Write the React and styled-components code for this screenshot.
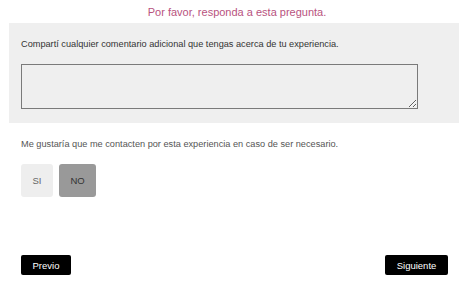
import React, { useState } from 'react';
import styled, { createGlobalStyle } from 'styled-components';

const GlobalStyle = createGlobalStyle`
  body {
    margin: 0;
    background: #ffffff;
    font-family: "Liberation Sans", Arial, sans-serif;
  }
`;

const Page = styled.div`
  width: 474px;
  height: 295px;
  display: flex;
  flex-direction: column;
  box-sizing: border-box;
  padding: 5px 15px 0 9px;
`;

const Warning = styled.div`
  text-align: center;
  color: #b8527e;
  font-size: 11px;
  line-height: 15px;
  padding-left: 6px;
  margin-bottom: 3px;
`;

const Panel = styled.div`
  background: #efefef;
  padding: 14px 41px 14px 12px;
  display: flex;
  flex-direction: column;
`;

const Label = styled.label`
  font-size: 9.2px;
  line-height: 14px;
  color: #333333;
  margin-bottom: 13px;
`;

const Comment = styled.textarea`
  box-sizing: border-box;
  width: 397px;
  height: 45px;
  margin: 0;
  background: #efefef;
  border: 1px solid #7a7a7a;
  resize: vertical;
  font-family: inherit;
`;

const Section = styled.div`
  padding: 14px 12px 0;
  display: flex;
  flex-direction: column;
`;

const Question = styled.div`
  font-size: 9.2px;
  line-height: 14px;
  color: #555555;
  margin-bottom: 13px;
`;

const Choices = styled.div`
  display: flex;
  gap: 6px;
`;

const Choice = styled.button`
  height: 33px;
  padding: 0;
  width: ${p => p.$w}px;
  border: none;
  border-radius: 3px;
  font-family: inherit;
  font-size: 9.5px;
  background: ${p => (p.$active ? '#999999' : '#eeeeee')};
  color: ${p => (p.$active ? '#333333' : '#666666')};
`;

const Nav = styled.div`
  margin-top: auto;
  padding: 0 11px 20px 12px;
  display: flex;
  justify-content: space-between;
`;

const NavButton = styled.button`
  height: 20px;
  width: ${p => p.$w}px;
  padding: 0;
  background: #000000;
  color: #ffffff;
  border: none;
  border-radius: 2px;
  font-family: inherit;
  font-size: 9.5px;
`;

export default function App() {
  const [answer, setAnswer] = useState('NO');
  return (
    <>
      <GlobalStyle />
      <Page>
        <Warning>Por favor, responda a esta pregunta.</Warning>
        <Panel>
          <Label>Compartí cualquier comentario adicional que tengas acerca de tu experiencia.</Label>
          <Comment />
        </Panel>
        <Section>
          <Question>Me gustaría que me contacten por esta experiencia en caso de ser necesario.</Question>
          <Choices>
            <Choice $w={32} $active={answer === 'SI'} onClick={() => setAnswer('SI')}>SI</Choice>
            <Choice $w={37} $active={answer === 'NO'} onClick={() => setAnswer('NO')}>NO</Choice>
          </Choices>
        </Section>
        <Nav>
          <NavButton $w={50}>Previo</NavButton>
          <NavButton $w={63}>Siguiente</NavButton>
        </Nav>
      </Page>
    </>
  );
}
